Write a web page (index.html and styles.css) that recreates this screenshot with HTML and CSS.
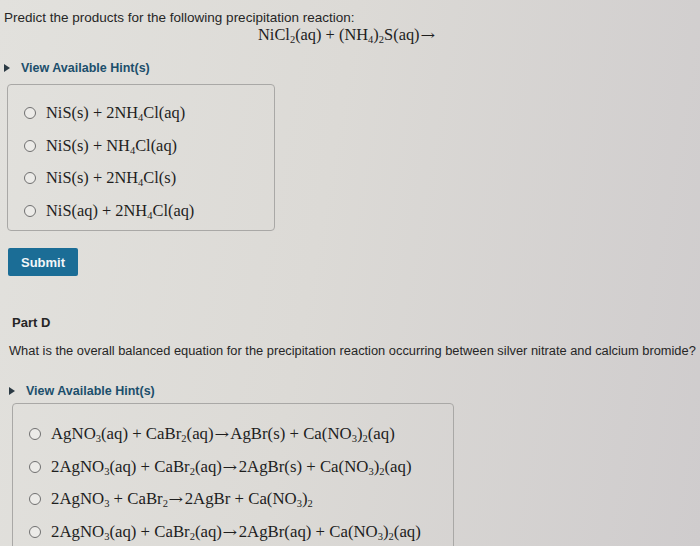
FILE: index.html
```html
<!DOCTYPE html>
<html>
<head>
<meta charset="utf-8">
<link rel="stylesheet" href="styles.css">
</head>
<body>
<div class="page">
  <div class="part">
    <p class="prompt">Predict the products for the following precipitation reaction:</p>
    <div class="eq-line"><span class="math">NiCl<sub>2</sub>(aq) + (NH<sub>4</sub>)<sub>2</sub>S(aq)<span class="arr">→</span></span></div>
    <div class="hint"><span class="tri"></span>View Available Hint(s)</div>
    <div class="box box1">
      <label class="opt"><span class="radio"></span><span class="math">NiS(s) + 2NH<sub>4</sub>Cl(aq)</span></label>
      <label class="opt"><span class="radio"></span><span class="math">NiS(s) + NH<sub>4</sub>Cl(aq)</span></label>
      <label class="opt"><span class="radio"></span><span class="math">NiS(s) + 2NH<sub>4</sub>Cl(s)</span></label>
      <label class="opt"><span class="radio"></span><span class="math">NiS(aq) + 2NH<sub>4</sub>Cl(aq)</span></label>
    </div>
    <button class="submit">Submit</button>
  </div>
  <div class="part partd">
    <h3 class="part-title">Part D</h3>
    <p class="prompt q2">What is the overall balanced equation for the precipitation reaction occurring between silver nitrate and calcium bromide?</p>
    <div class="hint hint2"><span class="tri"></span>View Available Hint(s)</div>
    <div class="box box2">
      <label class="opt"><span class="radio"></span><span class="math">AgNO<sub>3</sub>(aq) + CaBr<sub>2</sub>(aq)<span class="arr">→</span>AgBr(s) + Ca(NO<sub>3</sub>)<sub>2</sub>(aq)</span></label>
      <label class="opt"><span class="radio"></span><span class="math">2AgNO<sub>3</sub>(aq) + CaBr<sub>2</sub>(aq)<span class="arr">→</span>2AgBr(s) + Ca(NO<sub>3</sub>)<sub>2</sub>(aq)</span></label>
      <label class="opt"><span class="radio"></span><span class="math">2AgNO<sub>3</sub> + CaBr<sub>2</sub><span class="arr">→</span>2AgBr + Ca(NO<sub>3</sub>)<sub>2</sub></span></label>
      <label class="opt"><span class="radio"></span><span class="math">2AgNO<sub>3</sub>(aq) + CaBr<sub>2</sub>(aq)<span class="arr">→</span>2AgBr(aq) + Ca(NO<sub>3</sub>)<sub>2</sub>(aq)</span></label>
    </div>
  </div>
</div>
</body>
</html>
```
FILE: styles.css
```css
html, body {
  margin: 0;
  padding: 0;
}
body {
  width: 700px;
  height: 546px;
  overflow: hidden;
  background: linear-gradient(100deg, #e2e1dd 0%, #dcdad6 45%, #cfcccd 100%);
  font-family: "Liberation Sans", Arial, sans-serif;
  color: #262626;
}
.page {
  padding: 9px 0 0 4px;
}
.prompt {
  margin: 0;
  font-size: 13.5px;
  line-height: 17px;
}
.math {
  font-family: "Liberation Serif", "Times New Roman", serif;
  font-size: 16.4px;
  color: #1e1e1e;
  white-space: nowrap;
}
.math sub {
  font-size: 10.5px;
  vertical-align: -3px;
  line-height: 0;
}
.arr {
  display: inline-block;
  font-family: "DejaVu Serif", serif;
  font-size: 14px;
  transform: scaleX(1.25);
  margin: 0 3px 0 2px;
}
.eq-line {
  padding-left: 254px;
  line-height: 18px;
}
.hint {
  margin-top: 16px;
  font-size: 12.5px;
  font-weight: bold;
  color: #1c4f6c;
  display: flex;
  align-items: center;
  line-height: 16px;
}
.tri {
  width: 0;
  height: 0;
  border-top: 4px solid transparent;
  border-bottom: 4px solid transparent;
  border-left: 6px solid #2b3a44;
  margin-right: 11px;
}
.box {
  border: 1.5px solid #a9a8a6;
  border-radius: 4px;
  display: flex;
  flex-direction: column;
  gap: 14px;
  padding: 19px 0 0 16px;
}
.box1 {
  margin: 8px 0 0 3px;
  width: 250px;
  height: 126px;
}
.opt {
  display: flex;
  align-items: center;
  height: 18.5px;
}
.radio {
  width: 10px;
  height: 10px;
  border: 1.3px solid #707070;
  border-radius: 50%;
  margin-right: 10px;
  flex: none;
  background: #ecebe8;
}
.submit {
  display: block;
  margin: 17px 0 0 4px;
  width: 70px;
  height: 28px;
  border: none;
  border-radius: 2px;
  background: #1b6d96;
  color: #f2f6f8;
  font-family: "Liberation Sans", Arial, sans-serif;
  font-size: 13px;
  font-weight: bold;
  padding: 0;
}
.partd {
  padding-left: 5px;
}
.part-title {
  margin: 39px 0 0 3px;
  font-size: 13px;
  font-weight: bold;
  line-height: 16px;
}
.q2 {
  margin-top: 11px;
  font-size: 12.85px;
  white-space: nowrap;
}
.hint2 {
  margin-top: 24px;
}
.box2 {
  margin: 4px 0 0 3px;
  width: 424px;
  height: 160px;
  padding-top: 21px;
}
.box2 .math {
  font-size: 16.8px;
}
```
